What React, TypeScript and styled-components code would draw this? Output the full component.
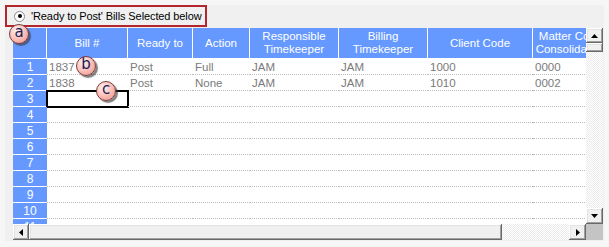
import * as React from 'react';
import styled, { createGlobalStyle } from 'styled-components';

const GlobalStyle = createGlobalStyle`
	html, body {
		margin: 0;
		padding: 0;
		background: #f6f6f6;
	}
	* { box-sizing: border-box; }
`;

const FONT = `'Liberation Sans', Arial, sans-serif`;
const BLUE = '#6699ff';
const COLS = '34px 81px 65px 57px 89px 89px 105px 76px';

interface Bill {
	bill: string;
	ready: string;
	action: string;
	resp: string;
	billing: string;
	client: string;
	matter: string;
}

const bills: Bill[] = [
	{ bill: '1837', ready: 'Post', action: 'Full', resp: 'JAM', billing: 'JAM', client: '1000', matter: '0000' },
	{ bill: '1838', ready: 'Post', action: 'None', resp: 'JAM', billing: 'JAM', client: '1010', matter: '0002' },
];

const headers = ['Bill #', 'Ready to', 'Action', 'Responsible\nTimekeeper', 'Billing\nTimekeeper', 'Client Code', 'Matter Code\nConsolidation'];

const Page = styled.div`
	width: 609px;
	height: 247px;
	padding: 5px 5px 0 5px;
	font-family: ${FONT};
`;

const Panel = styled.div`
	position: relative;
	height: 236px;
	background: #f0f0f0;
	display: flex;
	flex-direction: column;
`;

const RadioBox = styled.div`
	width: 202px;
	height: 22px;
	border: 2px solid #b2262c;
	display: flex;
	align-items: center;
	padding-left: 7px;
	gap: 6px;
	font-size: 11px;
	letter-spacing: -0.1px;
	white-space: nowrap;
	overflow: hidden;
	color: #000;
`;

const Radio = styled.span`
	flex: none;
	width: 11px;
	height: 11px;
	border-radius: 50%;
	background: #fff;
	border: 1px solid #8a8a8a;
	display: flex;
	align-items: center;
	justify-content: center;

	&::after {
		content: '';
		width: 4px;
		height: 4px;
		border-radius: 50%;
		background: #000;
	}
`;

const GridFrame = styled.div`
	margin: 1px 1px 0 8px;
	height: 212px;
	display: grid;
	grid-template-columns: 1fr 17px;
	grid-template-rows: 1fr 16px;
`;

const View = styled.div`
	background: #fff;
	overflow: hidden;
	font-size: 11.5px;
`;

const HeaderRow = styled.div`
	display: grid;
	grid-template-columns: ${COLS};
	height: 31px;
	background: ${BLUE};
	border-bottom: 1px solid #fff;
`;

const HeaderCell = styled.div`
	border-right: 1px solid #fff;
	color: #fff;
	display: flex;
	align-items: center;
	justify-content: center;
	text-align: center;
	white-space: pre;
	line-height: 13px;
	overflow: hidden;
`;

const Row = styled.div`
	display: grid;
	grid-template-columns: ${COLS};
	height: 16px;
`;

const RowHead = styled.div`
	background: ${BLUE};
	color: #fff;
	border-bottom: 1px solid #fff;
	display: flex;
	align-items: center;
	justify-content: center;
	font-size: 12px;
`;

const Cell = styled.div<{ $selected?: boolean }>`
	border-bottom: 1px dotted #bdbdbd;
	color: #7a7a7a;
	padding-left: 2px;
	display: flex;
	align-items: center;
	white-space: nowrap;
	outline: ${p => (p.$selected ? '2px solid #000' : 'none')};
	outline-offset: -1px;
`;

const VScroll = styled.div`
	display: flex;
	flex-direction: column;
	background: repeating-conic-gradient(#fff 0 25%, #ebebeb 0 50%) 0 0 / 2px 2px;
`;

const HScroll = styled.div`
	display: flex;
	background: repeating-conic-gradient(#fff 0 25%, #ebebeb 0 50%) 0 0 / 2px 2px;
`;

const Bevel = styled.div<{ $w?: number; $h?: number }>`
	flex: none;
	width: ${p => (p.$w ? `${p.$w}px` : 'auto')};
	height: ${p => (p.$h ? `${p.$h}px` : 'auto')};
	background: #f0f0f0;
	box-shadow: inset -1px -1px #696969, inset 1px 1px #fff, inset -2px -2px #a0a0a0, inset 2px 2px #e3e3e3;
	display: flex;
	align-items: center;
	justify-content: center;
`;

const Track = styled.div`
	flex: 1;
`;

const Corner = styled.div`
	background: #c4c4c4;
`;

const Callout = styled.div<{ $x: number; $y: number }>`
	position: absolute;
	left: ${p => p.$x}px;
	top: ${p => p.$y}px;
	width: 20px;
	height: 20px;
	border-radius: 50%;
	border: 1px solid #7a3a3a;
	background: radial-gradient(circle at 35% 30%, #fff1ef 0%, #fbc4bd 45%, #ee8f86 100%);
	box-shadow: 2px 2px 1px rgba(60, 60, 60, 0.65);
	display: flex;
	align-items: center;
	justify-content: center;
	color: #1b1b55;
	font-family: 'DejaVu Sans', sans-serif;
	font-size: 15px;
	line-height: 1;
	padding-bottom: 3px;
`;

const Arrow = ({ dir }: { dir: 'up' | 'down' | 'left' | 'right' }) => {
	const pts = {
		up: '0,4 7,4 3.5,0',
		down: '0,0 7,0 3.5,4',
		left: '4,0 4,7 0,3.5',
		right: '0,0 0,7 4,3.5',
	}[dir];
	const vertical = dir === 'up' || dir === 'down';
	return (
		<svg width={vertical ? 7 : 4} height={vertical ? 4 : 7} viewBox={vertical ? '0 0 7 4' : '0 0 4 7'}>
			<polygon points={pts} fill="#000" />
		</svg>
	);
};

const cellsOf = (b: Bill) => [b.bill, b.ready, b.action, b.resp, b.billing, b.client, b.matter];

export default function App() {
	const rows = Array.from({ length: 11 }, (_, i) => i);

	return (
		<Page>
			<GlobalStyle />
			<Panel>
				<RadioBox>
					<Radio />
					<span>'Ready to Post' Bills Selected below</span>
				</RadioBox>
				<GridFrame>
					<View>
						<HeaderRow>
							<HeaderCell />
							{headers.map(h => (
								<HeaderCell key={h}>{h}</HeaderCell>
							))}
						</HeaderRow>
						{rows.map(i => {
							const data = bills[i] ? cellsOf(bills[i]) : Array(7).fill('');
							return (
								<Row key={i}>
									<RowHead>{i + 1}</RowHead>
									{data.map((v: string, c: number) => (
										<Cell key={c} $selected={i === 2 && c === 0}>
											{v}
										</Cell>
									))}
								</Row>
							);
						})}
					</View>
					<VScroll>
						<Bevel $h={15}>
							<Arrow dir="up" />
						</Bevel>
						<Bevel $h={9} />
						<Track />
						<Bevel $h={16}>
							<Arrow dir="down" />
						</Bevel>
					</VScroll>
					<HScroll>
						<Bevel $w={16}>
							<Arrow dir="left" />
						</Bevel>
						<Bevel $w={473} />
						<Track />
						<Bevel $w={17}>
							<Arrow dir="right" />
						</Bevel>
					</HScroll>
					<Corner />
				</GridFrame>
				<Callout $x={4} $y={19}>a</Callout>
				<Callout $x={71} $y={51}>b</Callout>
				<Callout $x={91} $y={76}>c</Callout>
			</Panel>
		</Page>
	);
}
